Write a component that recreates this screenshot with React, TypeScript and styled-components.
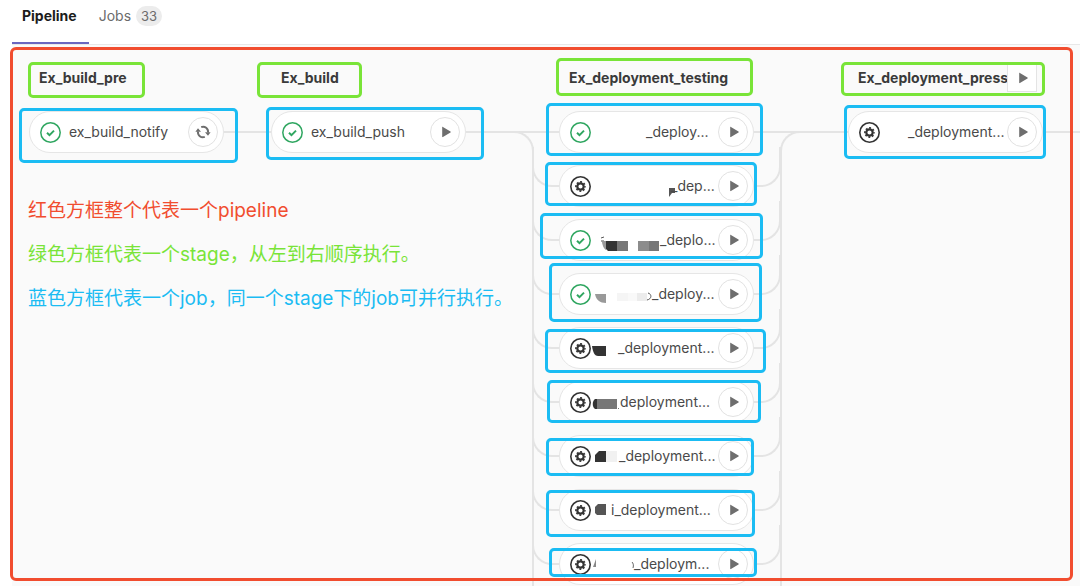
import React from "react";
import styled, { createGlobalStyle, css } from "styled-components";

const LINE = "#e4e4e4";
const RED = "#f14d2f";
const GREEN = "#79e438";
const BLUE = "#1bbcf3";

const GlobalStyle = createGlobalStyle`
  *, *::before, *::after { box-sizing: border-box; }
  body {
    margin: 0;
    background: #fff;
    color: #3a3a3a;
    font-family: Inter, "Noto Sans CJK SC", sans-serif;
    font-size: 14px;
  }
`;

const Page = styled.main`
  display: flex;
  flex-direction: column;
  height: 100vh;
`;

const Tabs = styled.nav`
  display: flex;
  flex: none;
  margin-left: 12px;
  border-bottom: 1px solid #e8e8e8;
`;

const Tab = styled.a<{ $active?: boolean }>`
  display: flex;
  align-items: center;
  gap: 5px;
  padding: 6px 12px 16px 10px;
  border-bottom: 2px solid ${(p) => (p.$active ? "#6a67c0" : "transparent")};
  color: ${(p) => (p.$active ? "#1c1c1c" : "#6b6b6b")};
  font-size: 14px;
  font-weight: ${(p) => (p.$active ? 700 : 400)};
  line-height: 20px;
  text-decoration: none;
`;

const Badge = styled.span`
  padding: 0 5px;
  border-radius: 10px;
  background: #ececec;
  font-size: 13px;
`;

const Graph = styled.div`
  position: relative;
  display: flex;
  flex: 1;
  min-height: 0;
  margin-left: 12px;
  padding: 19px 0 0 17px;
  background: #fafafa;
  overflow: clip;
  overflow-clip-margin: 4px;
`;

const PipelineFrame = styled.div`
  position: absolute;
  z-index: 3;
  inset: 2px 7px 5px -2px;
  border: 3px solid ${RED};
  border-radius: 6px;
  pointer-events: none;
`;

type Box = [left: number, top: number, width: number, height: number];

const Frame = styled.span<{ $box: Box; $color: string }>`
  position: absolute;
  z-index: 2;
  left: ${(p) => p.$box[0]}px;
  top: ${(p) => p.$box[1]}px;
  width: ${(p) => p.$box[2]}px;
  height: ${(p) => p.$box[3]}px;
  border: 3px solid ${(p) => p.$color};
  border-radius: 5px;
  pointer-events: none;
`;

const Stage = styled.section<{ $gap: number }>`
  flex: none;
  width: 195px;
  margin-right: ${(p) => p.$gap}px;
`;

const StageHeader = styled.header`
  position: relative;
  display: flex;
  align-items: center;
  height: 28px;
  margin-bottom: 19px;
  padding: 0 6px 0 10px;
`;

const StageName = styled.h2`
  flex: 1;
  min-width: 0;
  margin: 0;
  overflow: hidden;
  font-size: 14px;
  font-weight: 700;
  line-height: 20px;
  white-space: nowrap;
`;

const StageAction = styled.button`
  display: grid;
  flex: none;
  place-items: center;
  width: 30px;
  height: 28px;
  padding: 0;
  border: 1px solid ${LINE};
  background: #fff;
  color: #6e6e6e;
`;

const JobList = styled.ul<{ $branched: boolean }>`
  position: relative;
  display: flex;
  flex-direction: column;
  gap: 12px;
  margin: 0;
  padding: 0;
  list-style: none;

  ${(p) =>
    p.$branched &&
    css`
      &::before,
      &::after {
        content: "";
        position: absolute;
        top: 20px;
        bottom: -20px;
        width: 20px;
        border: 0 solid ${LINE};
        border-top-width: 2px;
      }
      &::before {
        left: -45px;
        border-right-width: 2px;
        border-top-right-radius: 20px;
      }
      &::after {
        right: -46px;
        border-left-width: 2px;
        border-top-left-radius: 20px;
      }
    `}
`;

const Job = styled.li<{ $line: number }>`
  position: relative;

  &:first-child::after {
    content: "";
    position: absolute;
    top: 20px;
    left: 100%;
    width: ${(p) => p.$line}px;
    height: 2px;
    background: ${LINE};
  }

  &:not(:first-child)::before,
  &:not(:first-child)::after {
    content: "";
    position: absolute;
    bottom: 20px;
    width: 27px;
    height: 40px;
    border: 0 solid ${LINE};
    border-bottom-width: 2px;
  }
  &:not(:first-child)::before {
    right: 100%;
    border-left-width: 2px;
    border-bottom-left-radius: 20px;
  }
  &:not(:first-child)::after {
    left: 100%;
    border-right-width: 2px;
    border-bottom-right-radius: 20px;
  }
`;

const Pill = styled.div`
  display: flex;
  align-items: center;
  height: 42px;
  padding: 0 5px 0 10px;
  border: 1px solid #e6e6e6;
  border-radius: 21px;
  background: #fff;
`;

const JobName = styled.span<{ $masked: boolean }>`
  flex: 1;
  min-width: 0;
  margin-left: ${(p) => (p.$masked ? 0 : 8)}px;
  color: #4a4a4a;
  font-size: 14px;
  font-weight: 400;
  line-height: 20px;
  white-space: nowrap;
`;

const JobAction = styled.button`
  display: grid;
  flex: none;
  place-items: center;
  width: 30px;
  height: 30px;
  padding: 0;
  border: 1px solid #e2e2e2;
  border-radius: 50%;
  background: #fff;
  color: #6e6e6e;
`;

const Icon = styled.svg`
  display: block;
  flex: none;
`;

const Notes = styled.div`
  position: absolute;
  left: 16px;
  top: 152px;
  display: grid;
  gap: 16px;
`;

const Note = styled.p<{ $color: string }>`
  margin: 0;
  color: ${(p) => p.$color};
  font-size: 19px;
  font-weight: 400;
  line-height: 28px;
  white-space: nowrap;
`;

const PlayIcon = () => (
  <Icon width="14" height="12" viewBox="-2 0 14 12" aria-hidden="true">
    <path d="M2.2 1.2v9.6c0 .4.4.5.7.3l7.6-4.6c.4-.2.4-.7 0-1L2.9.9c-.3-.2-.7 0-.7.3z" fill="currentColor" />
  </Icon>
);

const RetryIcon = () => (
  <Icon width="16" height="16" viewBox="0 0 16 16" fill="none" stroke="currentColor" strokeWidth="2" aria-hidden="true">
    <path d="M6.200 3.100A5 5 0 0 1 13 8.500M9.800 12.900A5 5 0 0 1 3 7.500" />
    <path d="M10 8.300h5.600l-2.600 3.500zM6 7.700H.4L3 4.200z" fill="currentColor" stroke="none" />
  </Icon>
);

const PassedIcon = () => (
  <Icon width="21" height="21" viewBox="0 0 21 21" fill="none" stroke="#2fa660" role="img" aria-label="passed">
    <circle cx="10.5" cy="10.5" r="9.700" strokeWidth="1.500" />
    <path d="M7 10.700l2.500 2.400 4.500-4.500" strokeWidth="2" />
  </Icon>
);

const ManualIcon = () => (
  <Icon width="21" height="21" viewBox="0 0 21 21" fill="none" stroke="#333" role="img" aria-label="manual">
    <circle cx="10.5" cy="10.5" r="9.700" strokeWidth="1.600" />
    <circle cx="10.5" cy="10.5" r="3.200" strokeWidth="2.200" />
    <circle cx="10.5" cy="10.5" r="4.600" strokeWidth="1.600" strokeDasharray="1.900 1.713" strokeDashoffset="0.950" />
  </Icon>
);

type JobData = {
  name: string;
  status: "passed" | "manual";
  action?: "retry";
  frame: Box;
  maskWidth?: number;
  mask?: React.ReactNode;
};

type StageData = {
  name: string;
  gap: number;
  frame: Box;
  playable?: boolean;
  jobs: JobData[];
};

const stages: StageData[] = [
  {
    name: "Ex_build_pre",
    gap: 47,
    frame: [-1, -2, 117, 36],
    jobs: [{ name: "ex_build_notify", status: "passed", action: "retry", frame: [-10, -3, 219, 55] }],
  },
  {
    name: "Ex_build",
    gap: 93,
    frame: [-14, -2, 105, 36],
    jobs: [{ name: "ex_build_push", status: "passed", frame: [-5, -4, 218, 53] }],
  },
  {
    name: "Ex_deployment_testing",
    gap: 94,
    frame: [-3, -6, 197, 38],
    jobs: [
      { name: "_deploy...", status: "passed", frame: [-13, -8, 217, 53], maskWidth: 55 },
      {
        name: "_dep...",
        status: "manual",
        frame: [-14, -3, 212, 44],
        maskWidth: 80,
        mask: <path d="M78 12h6v5h-3l-3 4z" fill="#555" />,
      },
      {
        name: "_deplo...",
        status: "passed",
        frame: [-19, -6, 223, 46],
        maskWidth: 69,
        mask: (
          <>
            <path d="M10 8l3-1M10 11h3" stroke="#555" fill="none" />
            <path d="M11 11h4v9c-2-1-4-5-4-9z" fill="#999" />
            <path d="M15 11h11v10h-9l-2-2z" fill="#333" />
            <path d="M26 11h11v10H26zM58 11h10v10H58z" fill="#777" />
            <path d="M47 11h11v10H47z" fill="#8c8c8c" />
          </>
        ),
      },
      {
        name: "_deploy...",
        status: "passed",
        frame: [-10, -10, 213, 59],
        maskWidth: 61,
        mask: (
          <>
            <path d="M4 10h11v9c-6 0-10-3-11-9z" fill="#999" />
            <path d="M26 9h11v8H26z" fill="#f5f5f5" />
            <path d="M37 9h9v8h-9z" fill="#f9f9f9" />
            <path d="M46 9h10v8H46z" fill="#ececec" />
            <path d="M57 9c4 1 4 6-1 7" stroke="#555" fill="none" />
          </>
        ),
      },
      {
        name: "_deployment...",
        status: "manual",
        frame: [-14, 2, 221, 44],
        maskWidth: 27,
        mask: <path d="M1 8h14v10H7c-3 0-5-3-6-10z" fill="#333" />,
      },
      {
        name: "deployment...",
        status: "manual",
        frame: [-12, -1, 214, 43],
        maskWidth: 29,
        mask: (
          <>
            <path d="M6 7v10H4c-3-2-3-8 0-10z" fill="#333" />
            <path d="M6 7h20v10H6zM27 16h1v1h-1z" fill="#777" />
          </>
        ),
      },
      {
        name: "_deployment...",
        status: "manual",
        frame: [-13, 3, 208, 38],
        maskWidth: 28,
        mask: (
          <>
            <path d="M15 5v11H4V9l4-4z" fill="#333" />
            <path d="M15 5h11v11H15z" fill="#f1f1f1" />
          </>
        ),
      },
      {
        name: "i_deployment...",
        status: "manual",
        frame: [-13, 1, 209, 47],
        maskWidth: 20,
        mask: <path d="M15 4v11H6l-2-2V7l3-3z" fill="#555" />,
      },
      {
        name: "_deploym...",
        status: "manual",
        frame: [-10, 5, 208, 29],
        maskWidth: 43,
        mask: (
          <>
            <path d="M5 5v8H2z" fill="#888" />
            <path d="M41 8c1 1 2 3 1 6" stroke="#666" fill="none" />
          </>
        ),
      },
    ],
  },
  {
    name: "Ex_deployment_press",
    gap: 37,
    frame: [-7, -2, 204, 34],
    playable: true,
    jobs: [{ name: "_deployment...", status: "manual", frame: [-4, -6, 202, 54], maskWidth: 28 }],
  },
];

const JobItem = ({ job, line }: { job: JobData; line: number }) => (
  <Job $line={line}>
    <Pill>
      {job.status === "passed" ? <PassedIcon /> : <ManualIcon />}
      {job.maskWidth !== undefined && (
        <Icon width={job.maskWidth} height="20" overflow="visible" aria-hidden="true">
          {job.mask}
        </Icon>
      )}
      <JobName $masked={job.maskWidth !== undefined}>{job.name}</JobName>
      <JobAction type="button" aria-label={job.action === "retry" ? "Retry" : "Play"}>
        {job.action === "retry" ? <RetryIcon /> : <PlayIcon />}
      </JobAction>
    </Pill>
    <Frame $box={job.frame} $color={BLUE} />
  </Job>
);

export default function App() {
  return (
    <Page>
      <GlobalStyle />
      <Tabs>
        <Tab href="#pipeline" $active aria-current="page">
          Pipeline
        </Tab>
        <Tab href="#jobs">
          Jobs <Badge>33</Badge>
        </Tab>
      </Tabs>
      <Graph id="pipeline">
        {stages.map((stage) => (
          <Stage key={stage.name} $gap={stage.gap}>
            <StageHeader>
              <StageName>{stage.name}</StageName>
              {stage.playable && (
                <StageAction type="button" aria-label="Play all">
                  <PlayIcon />
                </StageAction>
              )}
              <Frame $box={stage.frame} $color={GREEN} />
            </StageHeader>
            <JobList $branched={stage.jobs.length > 1}>
              {stage.jobs.map((job, i) => (
                <JobItem key={i} job={job} line={stage.gap} />
              ))}
            </JobList>
          </Stage>
        ))}
        <Notes>
          <Note $color={RED}>红色方框整个代表一个pipeline</Note>
          <Note $color={GREEN}>绿色方框代表一个stage，从左到右顺序执行。</Note>
          <Note $color={BLUE}>蓝色方框代表一个job，同一个stage下的job可并行执行。</Note>
        </Notes>
        <PipelineFrame />
      </Graph>
    </Page>
  );
}
